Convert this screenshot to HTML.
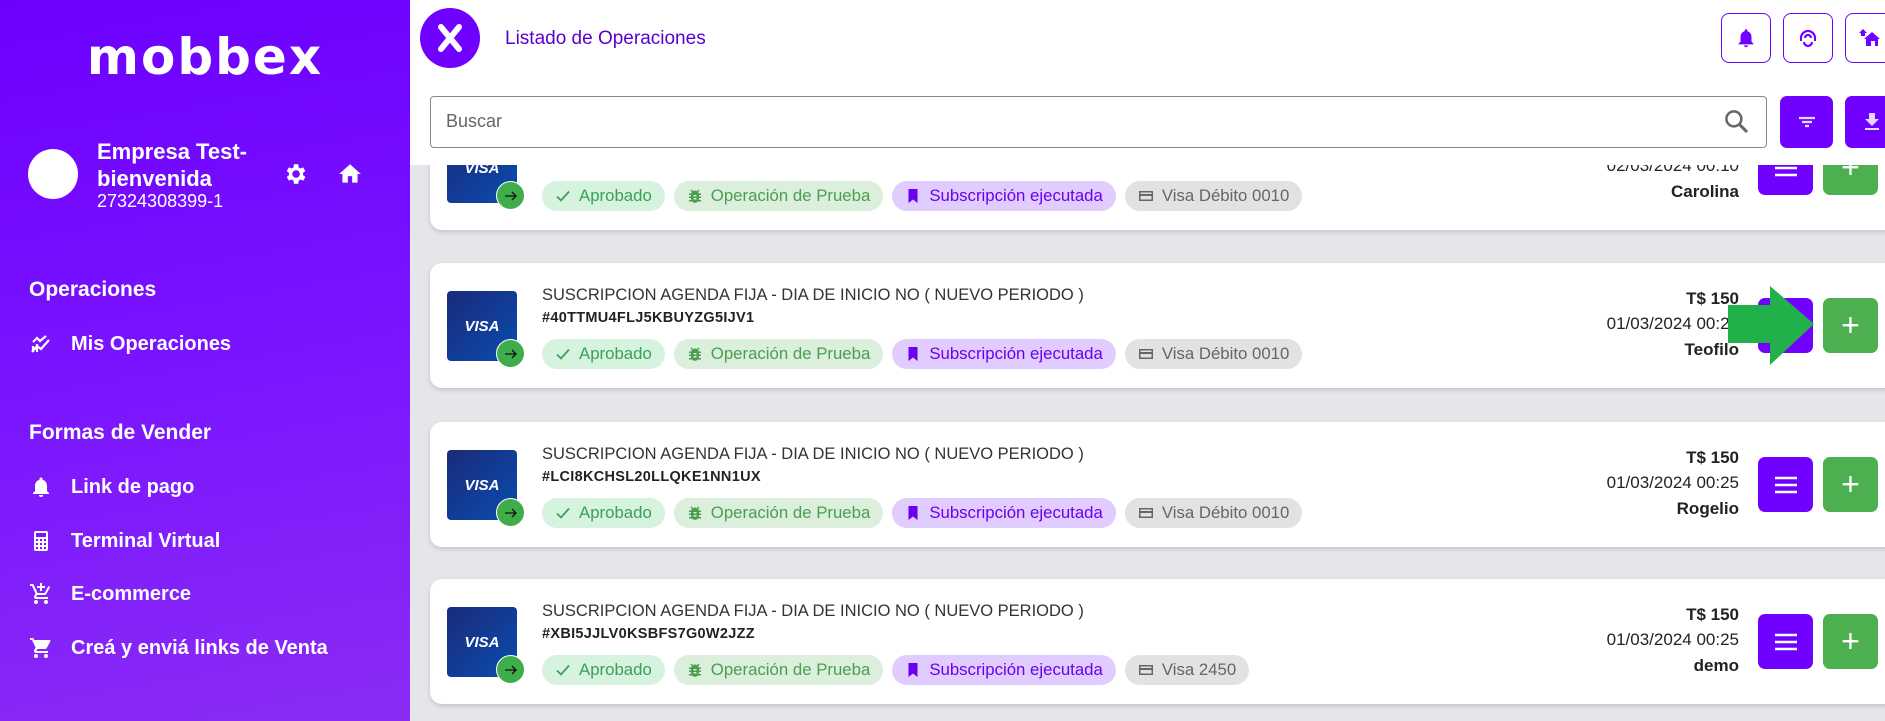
<!DOCTYPE html>
<html><head><meta charset="utf-8"><style>
*{box-sizing:border-box;margin:0;padding:0}
body{width:1885px;height:721px;overflow:hidden;position:relative;font-family:"Liberation Sans",sans-serif;background:#e4e6ea}
.sb{position:absolute;left:0;top:0;width:410px;height:721px;background:linear-gradient(170deg,#6c00ff 0%,#7a14ff 50%,#8a2cf5 100%);color:#fff}
.abs{position:absolute}
.logo{left:0;width:410px;top:28px;text-align:center;font-size:50px;font-weight:bold;letter-spacing:2px;font-family:"DejaVu Sans",sans-serif}
.sec{font-size:21px;font-weight:bold;left:29px}
.item{left:29px;font-size:20px;font-weight:bold;display:flex;align-items:center;gap:18px}
.item svg{width:24px;height:24px}
.hdr{position:absolute;left:410px;top:0;width:1475px;height:165px;background:#fff;z-index:5}
.hb{position:absolute;top:13px;width:50px;height:50px;border:1.5px solid #7000ff;border-radius:8px;display:flex;align-items:center;justify-content:center;background:#fff}
.pb{position:absolute;top:96px;width:53px;height:52px;background:#7000ff;border-radius:7px;display:flex;align-items:center;justify-content:center}
.card{position:absolute;left:430px;width:1480px;height:125px;background:#fff;border-radius:12px;box-shadow:0 2px 5px rgba(0,0,0,.15)}
.visa{position:absolute;left:17px;top:28px;width:70px;height:70px;border-radius:4px;background:linear-gradient(135deg,#1a2a7a,#0a4db0);color:#fff;font-weight:bold;font-style:italic;font-size:15px;display:flex;align-items:center;justify-content:center}
.arr{position:absolute;left:66px;top:76px;width:29px;height:29px;border-radius:50%;background:#3fae4a;border:1.5px solid #fff;display:flex;align-items:center;justify-content:center}
.t{position:absolute;left:112px;top:23px;font-size:16.5px;color:#333}
.id{position:absolute;left:112px;top:47px;font-size:14.5px;font-weight:bold;color:#222;letter-spacing:.3px}
.chips{position:absolute;left:112px;top:76px;display:flex;gap:9px}
.c{height:30px;border-radius:15px;padding:0 13px;display:flex;align-items:center;gap:8px;font-size:16.8px}
.c svg{width:16px;height:16px}
.g{background:#d6f3df;color:#3aa155}.g2{background:#dbefdc;color:#4a9f4e}.p{background:#e0ccff;color:#6a00f0}.gr{background:#e2e2e2;color:#666}
.r{position:absolute;right:171px;text-align:right;color:#222}
.amt{top:26px;font-size:17px;font-weight:bold}
.dt{top:51px;font-size:17px}
.nm{top:77px;font-size:17px;font-weight:bold}
.b1,.b2{position:absolute;top:35px;width:55px;height:55px;border-radius:7px;display:flex;align-items:center;justify-content:center;color:#fff;font-size:32px}
.b1{left:1328px;background:#7000ff}.b2{left:1393px;background:#4caf50}
</style></head><body>
<svg width="0" height="0" style="position:absolute"><defs>
<symbol id="chk" viewBox="0 0 16 16"><path d="M2 8.5l4 4 8-9" fill="none" stroke="#3aa155" stroke-width="1.8"/></symbol>
<symbol id="bug" viewBox="0 0 16 16"><path fill="#4a9f4e" d="M5 4l-1.5-1.5 1-1L6.2 3.2a3 3 0 013.6 0l1.7-1.7 1 1L11 4c.4.4.7 1 .8 1.5H14v1.5h-2v1.5h2V10h-2v.5c0 .6-.1 1-.3 1.5H14v1.5h-3a4 4 0 01-6 0H2V12h2.3A4 4 0 014 10.5V10H2V8.5h2V7H2V5.5h2.2C4.3 5 4.6 4.4 5 4zm1.5 3v1.5h3V7zm0 3v1.5h3V10z"/></symbol>
<symbol id="bk" viewBox="0 0 16 16"><path fill="#6a00f0" d="M3.5 1h9v14L8 11.5 3.5 15z"/></symbol>
<symbol id="cd" viewBox="0 0 16 16"><path fill="#666" d="M1 3h14v10H1zm1.5 1.5v1.5h11V4.5zm0 3.5v3.5h11V8z"/></symbol>
</defs></svg>
<div class="sb">
<div class="abs logo">mobbex</div>
<div class="abs" style="left:28px;top:149px;width:50px;height:50px;border-radius:50%;background:#fff"></div>
<div class="abs" style="left:97px;top:138px;font-size:22px;font-weight:bold;line-height:27px">Empresa Test-<br>bienvenida</div>
<div class="abs" style="left:97px;top:191px;font-size:18px">27324308399-1</div>
<svg class="abs" style="left:282px;top:161px" width="26" height="26" viewBox="0 0 24 24"><path fill="#fff" d="M19.4 13a7.5 7.5 0 000-2l2.1-1.6-2-3.5-2.5 1a7 7 0 00-1.7-1L15 3h-4l-.4 2.9a7 7 0 00-1.7 1l-2.5-1-2 3.5L6.5 11a7.5 7.5 0 000 2l-2.1 1.6 2 3.5 2.5-1a7 7 0 001.7 1L11 21h4l.4-2.9a7 7 0 001.7-1l2.5 1 2-3.5zM13 15.5a3.5 3.5 0 110-7 3.5 3.5 0 010 7z"/><circle cx="13" cy="12" r="1.8" fill="#7414ff"/></svg>
<svg class="abs" style="left:337px;top:161px" width="26" height="26" viewBox="0 0 24 24"><path fill="#fff" d="M10 20v-6h4v6h5v-8h3L12 3 2 12h3v8z"/></svg>
<div class="abs sec" style="top:278px">Operaciones</div>
<div class="abs item" style="top:332px"><svg viewBox="0 0 24 24"><path fill="none" stroke="#fff" stroke-width="2.2" d="M3 20l5-6 4 3 8-9M4 10l4-4 3 3 6-5M4 14v6M8 12v8"/></svg>Mis Operaciones</div>
<div class="abs sec" style="top:421px">Formas de Vender</div>
<div class="abs item" style="top:475px"><svg viewBox="0 0 24 24"><path fill="#fff" d="M12 22a2 2 0 002-2h-4a2 2 0 002 2zm6-6v-5c0-3-1.6-5.6-4.5-6.3V4a1.5 1.5 0 00-3 0v.7C7.6 5.4 6 8 6 11v5l-2 2v1h16v-1z"/></svg>Link de pago</div>
<div class="abs item" style="top:529px"><svg viewBox="0 0 24 24"><rect x="5" y="2" width="14" height="20" rx="2" fill="#fff"/><rect x="7" y="4" width="10" height="4" fill="#7a14ff"/><g fill="#7a14ff"><rect x="7" y="10" width="2" height="2"/><rect x="11" y="10" width="2" height="2"/><rect x="15" y="10" width="2" height="2"/><rect x="7" y="14" width="2" height="2"/><rect x="11" y="14" width="2" height="2"/><rect x="15" y="14" width="2" height="2"/><rect x="7" y="18" width="2" height="2"/><rect x="11" y="18" width="2" height="2"/><rect x="15" y="18" width="2" height="2"/></g></svg>Terminal Virtual</div>
<div class="abs item" style="top:582px"><svg viewBox="0 0 24 24"><path fill="#fff" d="M11 9h2V6h3V4h-3V1h-2v3H8v2h3zm-4 9a2 2 0 100 4 2 2 0 000-4zm10 0a2 2 0 100 4 2 2 0 000-4zM7.2 14.8L8.1 13h7.5c.7 0 1.4-.4 1.7-1l3.9-7-1.7-1-3.9 7h-7L4.3 2H1v2h2l3.6 7.6-1.4 2.4C4.5 15.3 5.5 17 7 17h12v-2H7.4z"/></svg>E-commerce</div>
<div class="abs item" style="top:636px"><svg viewBox="0 0 24 24"><path fill="#fff" d="M7 18a2 2 0 100 4 2 2 0 000-4zM1 2v2h2l3.6 7.6-1.4 2.4C4.5 15.3 5.5 17 7 17h12v-2H7.4l1.1-2h7.5c.8 0 1.4-.4 1.7-1l3.6-6.5A1 1 0 0020.4 4H5.2l-.9-2zm16 16a2 2 0 100 4 2 2 0 000-4z"/></svg>Creá y enviá links de Venta</div>
</div>

<div class="hdr">
<div class="abs" style="left:10px;top:8px;width:60px;height:60px;border-radius:50%;background:#7000ff;display:flex;align-items:center;justify-content:center"><svg width="34" height="34" viewBox="0 0 34 34"><path d="M8 6L26 28M26 6L8 28" stroke="#fff" stroke-width="6" stroke-linecap="round"/></svg></div>
<div class="abs" style="left:95px;top:28px;font-size:19px;color:#5a00d0">Listado de Operaciones</div>
<div class="hb" style="left:1311px"><svg width="22" height="22" viewBox="0 0 24 24"><path fill="#7000ff" d="M12 22a2 2 0 002-2h-4a2 2 0 002 2zm6-6v-5c0-3-1.6-5.6-4.5-6.3V4a1.5 1.5 0 00-3 0v.7C7.6 5.4 6 8 6 11v5l-2 2v1h16v-1z"/></svg></div>
<div class="hb" style="left:1373px"><svg width="24" height="24" viewBox="0 0 24 24"><path fill="none" stroke="#7000ff" stroke-width="2.2" d="M5 15v-3a7 7 0 0114 0v3M9 12a3 3 0 016 0M8 16a4 4 0 008 0"/></svg></div>
<div class="hb" style="left:1435px"><svg width="24" height="24" viewBox="0 0 24 24"><path fill="#7000ff" d="M13 20v-5h4v5h3v-7h2l-8-7-8 7h2v7zM5 3L1 7h2v3h4V7h2z"/></svg></div>
<div class="abs" style="left:20px;top:96px;width:1337px;height:52px;border:1px solid #888;border-radius:4px"></div>
<div class="abs" style="left:36px;top:111px;font-size:18px;color:#666">Buscar</div>
<svg class="abs" style="left:1312px;top:107px" width="30" height="30" viewBox="0 0 24 24"><circle cx="9.5" cy="9.5" r="6" fill="none" stroke="#666" stroke-width="2"/><path d="M14 14l6 6" stroke="#666" stroke-width="2.4"/></svg>
<div class="pb" style="left:1370px"><svg width="24" height="24" viewBox="0 0 24 24"><path d="M4 8h16M7 12h10M10 16h4" stroke="#e6d6ff" stroke-width="2.2"/></svg></div>
<div class="pb" style="left:1435px"><svg width="24" height="24" viewBox="0 0 24 24"><path fill="#e6d6ff" d="M19 9h-4V3H9v6H5l7 7zM5 18v2h14v-2z"/></svg></div>
</div>

<!-- cards -->
<div class="card" style="top:105px">
<div class="visa">VISA</div><div class="arr"><svg width="16" height="16" viewBox="0 0 16 16"><path d="M2 8h11M9 4l4 4-4 4" fill="none" stroke="#111" stroke-width="1.3"/></svg></div>
<div class="t">SUSCRIPCION AGENDA FIJA - DIA DE INICIO NO ( NUEVO PERIODO )</div>
<div class="id">#XXXXXXXXXXXXXXXXXX</div>
<div class="chips"><div class="c g"><svg><use href="#chk"/></svg>Aprobado</div><div class="c g2"><svg><use href="#bug"/></svg>Operación de Prueba</div><div class="c p"><svg><use href="#bk"/></svg>Subscripción ejecutada</div><div class="c gr"><svg><use href="#cd"/></svg>Visa Débito 0010</div></div>
<div class="r amt">T$ 150</div><div class="r dt">02/03/2024 00:10</div><div class="r nm">Carolina</div>
<div class="b1"><svg width="26" height="20" viewBox="0 0 26 20"><path d="M2 3h22M2 10h22M2 17h22" stroke="#fff" stroke-width="2.4"/></svg></div><div class="b2">+</div>
</div>
<div class="card" style="top:263px">
<div class="visa">VISA</div><div class="arr"><svg width="16" height="16" viewBox="0 0 16 16"><path d="M2 8h11M9 4l4 4-4 4" fill="none" stroke="#111" stroke-width="1.3"/></svg></div>
<div class="t">SUSCRIPCION AGENDA FIJA - DIA DE INICIO NO ( NUEVO PERIODO )</div>
<div class="id">#40TTMU4FLJ5KBUYZG5IJV1</div>
<div class="chips"><div class="c g"><svg><use href="#chk"/></svg>Aprobado</div><div class="c g2"><svg><use href="#bug"/></svg>Operación de Prueba</div><div class="c p"><svg><use href="#bk"/></svg>Subscripción ejecutada</div><div class="c gr"><svg><use href="#cd"/></svg>Visa Débito 0010</div></div>
<div class="r amt">T$ 150</div><div class="r dt">01/03/2024 00:25</div><div class="r nm">Teofilo</div>
<div class="b1"><svg width="26" height="20" viewBox="0 0 26 20"><path d="M2 3h22M2 10h22M2 17h22" stroke="#fff" stroke-width="2.4"/></svg></div><div class="b2">+</div>
</div>
<div class="card" style="top:422px">
<div class="visa">VISA</div><div class="arr"><svg width="16" height="16" viewBox="0 0 16 16"><path d="M2 8h11M9 4l4 4-4 4" fill="none" stroke="#111" stroke-width="1.3"/></svg></div>
<div class="t">SUSCRIPCION AGENDA FIJA - DIA DE INICIO NO ( NUEVO PERIODO )</div>
<div class="id">#LCI8KCHSL20LLQKE1NN1UX</div>
<div class="chips"><div class="c g"><svg><use href="#chk"/></svg>Aprobado</div><div class="c g2"><svg><use href="#bug"/></svg>Operación de Prueba</div><div class="c p"><svg><use href="#bk"/></svg>Subscripción ejecutada</div><div class="c gr"><svg><use href="#cd"/></svg>Visa Débito 0010</div></div>
<div class="r amt">T$ 150</div><div class="r dt">01/03/2024 00:25</div><div class="r nm">Rogelio</div>
<div class="b1"><svg width="26" height="20" viewBox="0 0 26 20"><path d="M2 3h22M2 10h22M2 17h22" stroke="#fff" stroke-width="2.4"/></svg></div><div class="b2">+</div>
</div>
<div class="card" style="top:579px">
<div class="visa">VISA</div><div class="arr"><svg width="16" height="16" viewBox="0 0 16 16"><path d="M2 8h11M9 4l4 4-4 4" fill="none" stroke="#111" stroke-width="1.3"/></svg></div>
<div class="t">SUSCRIPCION AGENDA FIJA - DIA DE INICIO NO ( NUEVO PERIODO )</div>
<div class="id">#XBI5JJLV0KSBFS7G0W2JZZ</div>
<div class="chips"><div class="c g"><svg><use href="#chk"/></svg>Aprobado</div><div class="c g2"><svg><use href="#bug"/></svg>Operación de Prueba</div><div class="c p"><svg><use href="#bk"/></svg>Subscripción ejecutada</div><div class="c gr"><svg><use href="#cd"/></svg>Visa 2450</div></div>
<div class="r amt">T$ 150</div><div class="r dt">01/03/2024 00:25</div><div class="r nm">demo</div>
<div class="b1"><svg width="26" height="20" viewBox="0 0 26 20"><path d="M2 3h22M2 10h22M2 17h22" stroke="#fff" stroke-width="2.4"/></svg></div><div class="b2">+</div>
</div>
<svg class="abs" style="left:1728px;top:286px;z-index:6" width="88" height="80" viewBox="0 0 88 80"><path fill="#22b04a" d="M0 19h42V0l44 38-44 41V57H0z"/></svg>
</body></html>
